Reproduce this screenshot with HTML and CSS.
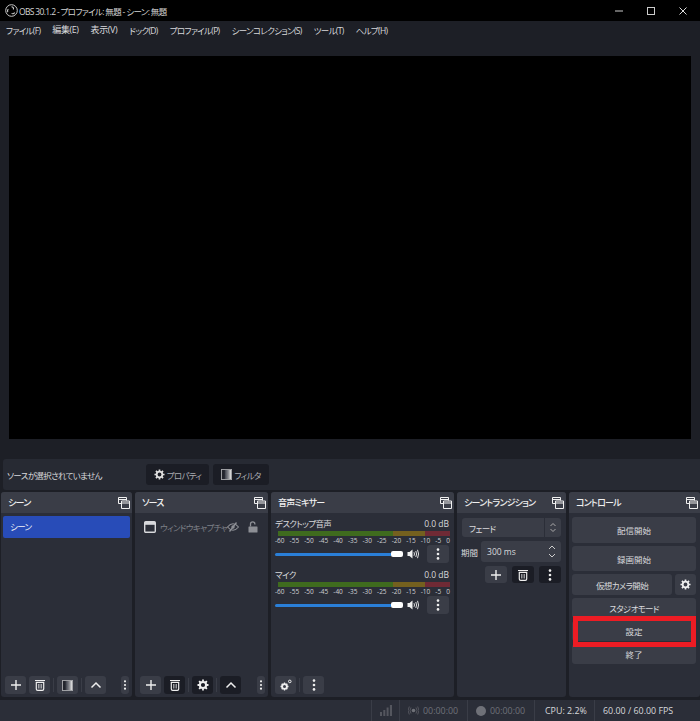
FILE: index.html
```html
<!DOCTYPE html>
<html lang="ja">
<head>
    <meta charset="UTF-8">
    <title>OBS 30.1.2</title>
    <link rel="stylesheet" href="styles.css">
</head>
<body>
    <svg class="defs" width="0" height="0">
        <defs>
            <linearGradient id="filter-fade"><stop offset="0" stop-color="#3a3d47"/><stop offset=".55" stop-color="#85878d"/><stop offset="1" stop-color="#e8e8e8"/></linearGradient>
        </defs>
        <symbol id="i-float" viewBox="0 0 12 12"><path d="M.5.5h8v3M.5.5v6h3M.5 2.500h8M3.500 4h8v7.500h-8zM3.500 6h8" fill="none" stroke="currentColor"/></symbol>
        <symbol id="i-plus" viewBox="0 0 12 12"><path d="M6 1v10M1 6h10" fill="none" stroke="currentColor" stroke-width="1.400"/></symbol>
        <symbol id="i-trash" viewBox="0 0 12 12"><path d="M1 1.500h10" stroke="currentColor" stroke-width="1.200"/><path d="M2.300 3.300h7.400v6.700q0 1.400-1.400 1.400H3.700q-1.400 0-1.400-1.400z" fill="none" stroke="currentColor" stroke-width="1.200"/><path d="M4.500 5v4.500M6 5v4.500M7.500 5v4.500" stroke="currentColor" stroke-width=".6"/></symbol>
        <symbol id="i-filter" viewBox="0 0 12 12"><rect x="1" y="1" width="3" height="10" fill="#23252d"/><rect x="4" y="1" width="7" height="10" fill="url(#filter-fade)"/><rect x=".5" y=".5" width="11" height="11" fill="none" stroke="#a8a9ad"/></symbol>
        <symbol id="i-up" viewBox="0 0 12 12"><path d="M1.500 8.500 6 4l4.500 4.500" fill="none" stroke="currentColor" stroke-width="1.500"/></symbol>
        <symbol id="i-dots" viewBox="0 0 4 12"><circle cx="2" cy="1.600" r="1.300" fill="currentColor"/><circle cx="2" cy="6" r="1.300" fill="currentColor"/><circle cx="2" cy="10.400" r="1.300" fill="currentColor"/></symbol>
        <symbol id="i-gear" viewBox="0 0 12 12"><circle cx="6" cy="6" r="3.100" fill="none" stroke="currentColor" stroke-width="2"/><path d="M6 .5v2M6 9.500v2M.5 6h2M9.500 6h2M2.100 2.100l1.400 1.400M8.500 8.500l1.400 1.400M2.100 9.900l1.400-1.400M8.500 3.500l1.400-1.400" stroke="currentColor" stroke-width="1.800"/></symbol>
        <symbol id="i-gears" viewBox="0 0 12 12"><circle cx="4.500" cy="7.500" r="2.400" fill="none" stroke="currentColor" stroke-width="1.800"/><path d="M4.500 3.500v1.500M4.500 10v1.500M.5 7.500H2M7 7.500h1.500M1.700 4.700l1 1M6.300 9.300l1 1M1.700 10.300l1-1M6.300 5.700l1-1" stroke="currentColor" stroke-width="1.300"/><circle cx="9.800" cy="2.400" r="1.300" fill="none" stroke="currentColor"/></symbol>
        <symbol id="i-speaker" viewBox="0 0 12 12"><path d="M.5 4h2L5.500 1.500v9L2.500 8h-2z" fill="currentColor"/><path d="M7 4.200q1 1.800 0 3.600M8.800 3q1.600 3 0 6M10.500 1.800q2.200 4.200 0 8.400" fill="none" stroke="currentColor" stroke-width=".9"/></symbol>
        <symbol id="i-window" viewBox="0 0 12 12"><rect x=".7" y=".7" width="10.600" height="10.600" rx="1" fill="none" stroke="currentColor" stroke-width="1.400"/><rect x="1" y="1" width="10" height="2.800" fill="currentColor"/></symbol>
        <symbol id="i-eye" viewBox="0 0 12 10"><path d="M.5 5Q6-1.500 11.500 5 6 11.500.5 5z" fill="none" stroke="currentColor" stroke-width="1.100"/><circle cx="6" cy="5" r="1.700" fill="currentColor"/><path d="M9.500.5 2.500 9.500" stroke="currentColor" stroke-width="1.300"/></symbol>
        <symbol id="i-lock" viewBox="0 0 10 12"><path d="M2.500 5.500V3a2.200 2.200 0 0 1 4.400 0v.5" fill="none" stroke="currentColor" stroke-width="1.300"/><rect x=".5" y="5.500" width="9" height="6" rx=".5" fill="currentColor"/></symbol>
    </svg>

    <div class="app">
        <header class="titlebar">
            <svg class="logo" width="13" height="13" viewBox="0 0 13 13"><circle cx="6.500" cy="6.500" r="5.800" fill="none" stroke="#ddd" stroke-width=".9"/><path d="M6.500 2.700a2 2 0 0 1 1.800 2.900M3 8.200a2 2 0 0 1 .4-3M9.600 8.600a2 2 0 0 1-3 .8" fill="none" stroke="#ccc" stroke-width="1.100"/></svg>
            <span class="title">OBS 30.1.2 - プロファイル: 無題 - シーン: 無題</span>
            <div class="win-btns">
                <svg width="8" height="8" viewBox="0 0 8 8"><path d="M0 4h8" stroke="#ccc"/></svg>
                <svg width="8" height="8" viewBox="0 0 8 8"><rect x=".5" y=".5" width="7" height="7" fill="none" stroke="#ccc"/></svg>
                <svg width="8" height="8" viewBox="0 0 8 8"><path d="M.5.500l7 7M7.500.500l-7 7" stroke="#ddd"/></svg>
            </div>
        </header>

        <nav class="menubar">
            <span>ファイル(F)</span><span class="kanji">編集(E)</span><span class="kanji">表示(V)</span><span>ドック(D)</span><span>プロファイル(P)</span><span>シーンコレクション(S)</span><span>ツール(T)</span><span>ヘルプ(H)</span>
        </nav>

        <main class="preview-wrap">
            <div class="preview"></div>
        </main>

        <div class="context">
            <span class="context-label">ソースが選択されていません</span>
            <button class="ctx-btn props"><svg width="11" height="11"><use href="#i-gear"/></svg>プロパティ</button>
            <button class="ctx-btn filters"><svg width="11" height="11"><use href="#i-filter"/></svg>フィルタ</button>
        </div>

        <div class="docks">
            <section class="dock">
                <div class="dock-head"><span>シーン</span><svg width="12" height="12"><use href="#i-float"/></svg></div>
                <div class="dock-body">
                    <div class="scene-list"><div class="scene-item">シーン</div></div>
                    <div class="tools">
                        <button class="tool"><svg width="12" height="12"><use href="#i-plus"/></svg></button>
                        <button class="tool"><svg width="12" height="12"><use href="#i-trash"/></svg></button>
                        <i class="tool-sep"></i>
                        <button class="tool"><svg width="11" height="11"><use href="#i-filter"/></svg></button>
                        <i class="tool-sep"></i>
                        <button class="tool"><svg width="12" height="12"><use href="#i-up"/></svg></button>
                        <button class="tool more"><svg width="4" height="10"><use href="#i-dots"/></svg></button>
                    </div>
                </div>
            </section>

            <section class="dock">
                <div class="dock-head"><span>ソース</span><svg width="12" height="12"><use href="#i-float"/></svg></div>
                <div class="dock-body">
                    <div class="source-list">
                        <div class="source-item">
                            <svg class="src-icon" width="12" height="12"><use href="#i-window"/></svg>
                            <span class="src-name">ウィンドウキャプチャ</span>
                            <svg class="src-eye" width="12" height="10"><use href="#i-eye"/></svg>
                            <svg class="src-lock" width="10" height="12"><use href="#i-lock"/></svg>
                        </div>
                    </div>
                    <div class="tools src-tools">
                        <button class="tool"><svg width="12" height="12"><use href="#i-plus"/></svg></button>
                        <button class="tool dark"><svg width="12" height="12"><use href="#i-trash"/></svg></button>
                        <i class="tool-sep"></i>
                        <button class="tool dark"><svg width="12" height="12"><use href="#i-gear"/></svg></button>
                        <i class="tool-sep"></i>
                        <button class="tool dark"><svg width="12" height="12"><use href="#i-up"/></svg></button>
                        <button class="tool more"><svg width="4" height="10"><use href="#i-dots"/></svg></button>
                    </div>
                </div>
            </section>

            <section class="dock">
                <div class="dock-head"><span>音声ミキサー</span><svg width="12" height="12"><use href="#i-float"/></svg></div>
                <div class="dock-body">
                    <div class="mixer">
                        <div class="channel">
                            <div class="ch-top"><span class="kana">デスクトップ音声</span><span>0.0 dB</span></div>
                            <div class="meter"><i class="m-green"></i><i class="m-yellow"></i><i class="m-red"></i></div>
                            <div class="ticks"><span>-60</span><span>-55</span><span>-50</span><span>-45</span><span>-40</span><span>-35</span><span>-30</span><span>-25</span><span>-20</span><span>-15</span><span>-10</span><span>-5</span><span>0</span></div>
                            <div class="ch-ctrl">
                                <div class="slider"><i class="slider-fill"></i><i class="slider-knob"></i></div>
                                <svg class="speaker" width="12" height="12"><use href="#i-speaker"/></svg>
                                <button class="tool ch-more"><svg width="4" height="12"><use href="#i-dots"/></svg></button>
                            </div>
                        </div>
                        <div class="channel">
                            <div class="ch-top"><span class="kana">マイク</span><span>0.0 dB</span></div>
                            <div class="meter"><i class="m-green"></i><i class="m-yellow"></i><i class="m-red"></i></div>
                            <div class="ticks"><span>-60</span><span>-55</span><span>-50</span><span>-45</span><span>-40</span><span>-35</span><span>-30</span><span>-25</span><span>-20</span><span>-15</span><span>-10</span><span>-5</span><span>0</span></div>
                            <div class="ch-ctrl">
                                <div class="slider"><i class="slider-fill"></i><i class="slider-knob"></i></div>
                                <svg class="speaker" width="12" height="12"><use href="#i-speaker"/></svg>
                                <button class="tool ch-more"><svg width="4" height="12"><use href="#i-dots"/></svg></button>
                            </div>
                        </div>
                    </div>
                    <div class="tools">
                        <button class="tool"><svg width="12" height="12"><use href="#i-gears"/></svg></button>
                        <i class="tool-sep"></i>
                        <button class="tool"><svg width="4" height="12"><use href="#i-dots"/></svg></button>
                    </div>
                </div>
            </section>

            <section class="dock">
                <div class="dock-head"><span>シーントランジション</span><svg width="12" height="12"><use href="#i-float"/></svg></div>
                <div class="dock-body trans">
                    <div class="combo"><span class="kana">フェード</span><i class="combo-sep"></i><svg width="6" height="11" viewBox="0 0 6 11"><path d="M.5 4 3 1.500 5.500 4M.5 7 3 9.500 5.500 7" fill="none" stroke="#aaa"/></svg></div>
                    <div class="duration">
                        <span>期間</span>
                        <div class="spin"><span>300 ms</span><svg width="8" height="13" viewBox="0 0 8 13"><path d="M1 4 4 1l3 3M1 9l3 3 3-3" fill="none" stroke="#ccc"/></svg></div>
                    </div>
                    <div class="trans-tools">
                        <button class="tool"><svg width="12" height="12"><use href="#i-plus"/></svg></button>
                        <button class="tool dark"><svg width="12" height="12"><use href="#i-trash"/></svg></button>
                        <button class="tool dark"><svg width="4" height="12"><use href="#i-dots"/></svg></button>
                    </div>
                </div>
            </section>

            <section class="dock">
                <div class="dock-head"><span>コントロール</span><svg width="12" height="12"><use href="#i-float"/></svg></div>
                <div class="dock-body controls">
                    <button class="ctl first">配信開始</button>
                    <button class="ctl second">録画開始</button>
                    <div class="ctl-row">
                        <button class="ctl"><span class="kana">仮想カメラ開始</span></button>
                        <button class="ctl ctl-gear"><svg width="11" height="11"><use href="#i-gear"/></svg></button>
                    </div>
                    <button class="ctl"><span class="kana">スタジオモード</span></button>
                    <button class="ctl marked">設定</button>
                    <button class="ctl">終了</button>
                </div>
            </section>
        </div>

        <footer class="statusbar">
            <div class="stat sig">
                <svg width="12" height="11" viewBox="0 0 12 11"><path d="M0 7h2v4H0zM3.300 5h2v6h-2zM6.600 2.500h2V11h-2zM9.900 0H12v11H9.900z" fill="#54565e"/></svg>
            </div>
            <div class="stat rec-live">
                <svg width="11" height="9" viewBox="0 0 11 9"><circle cx="5.500" cy="4.500" r="1.800" fill="#6f7178"/><path d="M3 1.500q-2 3 0 6M8 1.500q2 3 0 6M1.300.500q-2.500 4 0 8M9.700.500q2.500 4 0 8" fill="none" stroke="#5f6168" stroke-width=".8"/></svg>
                <span class="dim">00:00:00</span>
            </div>
            <div class="stat rec-file">
                <i class="rec-dot"></i>
                <span class="dim">00:00:00</span>
            </div>
            <div class="stat cpu">CPU: 2.2%</div>
            <div class="stat fps">60.00 / 60.00 FPS</div>
        </footer>
    </div>
</body>
</html>
```
FILE: styles.css
```css
* {
    box-sizing: border-box;
}

html, body {
    margin: 0;
    height: 100%;
}

body {
    font-family: "Open Sans", "Noto Sans CJK JP", sans-serif;
    font-size: 8.500px;
    font-feature-settings: "palt";
    color: #d8d9dc;
    background-color: #1d1f26;
    overflow: hidden;
}

button {
    font: inherit;
    color: inherit;
    border: none;
    padding: 0;
}

svg {
    display: block;
    flex: none;
}

.defs {
    position: absolute;
}

/* kana runs are much narrower in the original UI font */
.kana,
.menubar,
.title,
.context-label,
.ctx-btn,
.scene-item,
.src-name {
    font-size: 8.500px;
    letter-spacing: -0.65px;
}

.app {
    display: flex;
    flex-direction: column;
    height: 721px;
}

.titlebar {
    display: flex;
    align-items: center;
    height: 21px;
    padding-left: 5px;
    background-color: #000;
    color: #d4d4d4;
}

.title {
    margin-left: 1px;
}

.win-btns {
    display: flex;
    gap: 24px;
    margin-left: auto;
    margin-right: 13px;
}

.menubar {
    display: flex;
    gap: 12px;
    align-items: center;
    height: 17px;
    padding-left: 6px;
    background-color: #1d1f26;
    color: #d8d9dc;
}

.kanji {
    font-size: 9px;
    letter-spacing: -0.4px;
}

.preview-wrap {
    height: 421px;
    padding: 18px 9px 20px;
}

.preview {
    height: 100%;
    background-color: #000;
}

.context {
    display: flex;
    align-items: center;
    height: 31px;
    margin: 0 0 2px 3px;
    padding-left: 4px;
    background-color: #272a33;
    border-radius: 3px 0 0 3px;
}

.context-label {
    width: 139px;
}

.ctx-btn {
    display: flex;
    align-items: center;
    justify-content: center;
    gap: 2px;
    height: 21px;
    background-color: #1b1d25;
    border-radius: 3px;
    color: #a9abb0;
}

.ctx-btn svg {
    color: #e0e0e0;
}

.props {
    width: 63px;
}

.filters {
    width: 56px;
    margin-left: 4px;
}

.docks {
    display: grid;
    grid-template-columns: 131px 133px 183px 109px 131px;
    gap: 3px;
    height: 205px;
    margin-left: 1px;
}

.dock {
    display: flex;
    flex-direction: column;
    background-color: #2b2e38;
    border-radius: 3px;
    overflow: hidden;
}

.dock-head {
    display: flex;
    align-items: center;
    justify-content: space-between;
    flex: none;
    height: 21px;
    padding: 0 2px 0 7px;
    background-color: #3a3d47;
    font-size: 9px;
    font-weight: 500;
    letter-spacing: -0.8px;
    color: #f0f0f0;
}

.dock-body {
    display: flex;
    flex-direction: column;
    flex: 1;
    min-height: 0;
}

.scene-list {
    flex: 1;
    padding: 3px 2px;
}

.scene-item {
    height: 22px;
    line-height: 22px;
    padding-left: 7px;
    background-color: #284cb8;
    border-radius: 2px;
    color: #f2f3f7;
}

.source-list {
    flex: 1;
    padding-top: 7px;
}

.source-item {
    display: flex;
    align-items: center;
    height: 13px;
    padding-left: 9px;
}

.src-icon {
    color: #d8d9dc;
}

.src-name {
    width: 67px;
    margin-left: 4px;
    white-space: nowrap;
    color: #7e8087;
}

.src-eye {
    color: #8d8f95;
}

.src-lock {
    margin-left: 9px;
    color: #8d8f95;
}

.tools {
    display: flex;
    align-items: center;
    gap: 3px;
    flex: none;
    height: 18px;
    margin: 0 3px 3px 4px;
}

.src-tools {
    margin-left: 5px;
}

.tool {
    display: flex;
    align-items: center;
    justify-content: center;
    width: 21px;
    height: 18px;
    background-color: #3a3d47;
    border-radius: 3px;
    color: #eee;
}

.tool.dark {
    background-color: #1b1d25;
}

.tool.more {
    width: 8px;
    margin-left: auto;
}

.tool-sep {
    width: 1px;
    height: 14px;
    background-color: #3a3d47;
}

.mixer {
    flex: 1;
    padding: 5px 5px 0 4px;
}

.channel {
    margin-bottom: 6px;
}

.ch-top {
    display: flex;
    justify-content: space-between;
    height: 12px;
    line-height: 12px;
}

.meter {
    display: flex;
    height: 5px;
    margin: 1px -1px 0 3px;
}

.meter i {
    display: block;
    height: 100%;
}

.m-green {
    width: 115px;
    background-color: #3f6b1e;
}

.m-yellow {
    width: 32px;
    background-color: #74601f;
}

.m-red {
    flex: 1;
    background-color: #6f2a35;
}

.ticks {
    display: flex;
    justify-content: space-between;
    height: 10px;
    margin-right: -1px;
    font-size: 6.500px;
    line-height: 10px;
    color: #d0d1d4;
}

.ch-ctrl {
    display: flex;
    align-items: center;
    height: 18px;
    margin-top: -1px;
}

.slider {
    display: flex;
    align-items: center;
    width: 128px;
}

.slider-fill {
    flex: 1;
    height: 3px;
    background-color: #2a7fd8;
    border-radius: 2px 0 0 2px;
}

.slider-knob {
    width: 12px;
    height: 6px;
    background-color: #fff;
    border-radius: 2px;
}

.speaker {
    margin-left: 4px;
    color: #f0f0f0;
}

.ch-more {
    width: 22px;
    margin-left: auto;
}

.trans {
    padding: 5px 5px 0;
}

.combo {
    display: flex;
    align-items: center;
    height: 19px;
    padding: 0 5px 0 7px;
    background-color: #3a3d47;
    border-radius: 3px;
}

.combo-sep {
    width: 1px;
    height: 100%;
    margin-left: auto;
    margin-right: 5px;
    background-color: #2b2e38;
}

.duration {
    display: flex;
    align-items: center;
    gap: 3px;
    margin: 4px 0 0 -1px;
}

.spin {
    display: flex;
    align-items: center;
    justify-content: space-between;
    flex: 1;
    height: 21px;
    padding: 0 5px 0 6px;
    background-color: #3a3d47;
    border-radius: 3px;
}

.trans-tools {
    display: flex;
    gap: 5px;
    justify-content: flex-end;
    margin-top: 4px;
}

.trans-tools .tool {
    height: 17px;
    width: 22px;
}

.controls {
    position: relative;
    gap: 3px;
    padding: 4px 4px 0 3px;
}

.ctl {
    height: 20px;
    background-color: #3a3d47;
    border-radius: 3px;
    color: #d8d9dc;
    flex: none;
}

.ctl.first {
    height: 26px;
}

.ctl.second {
    height: 25px;
}

.ctl-row {
    display: grid;
    grid-template-columns: 1fr 21px;
    gap: 3px;
    height: 21px;
}

.ctl-row .ctl {
    height: 21px;
}

.ctl-gear {
    display: flex;
    align-items: center;
    justify-content: center;
    color: #eee;
}

/* red annotation over the settings button */
.marked {
    position: relative;
}

.marked::after {
    content: "";
    position: absolute;
    inset: -5px 0 -6px 1px;
    border: 5px solid #ed1c24;
}

.statusbar {
    display: flex;
    justify-content: flex-end;
    height: 22px;
    margin-top: 2px;
    background-color: #2b2e38;
    border-top: 1px solid #1d1f26;
    font-size: 8.900px;
}

.stat {
    display: flex;
    align-items: center;
    gap: 4px;
    padding-left: 8px;
    border-left: 1px solid #3a3d47;
}

.sig {
    width: 28px;
}

.rec-live {
    width: 68px;
}

.rec-file {
    width: 67px;
}

.cpu {
    width: 60px;
    padding-left: 10px;
}

.fps {
    width: 106px;
}

.dim {
    color: #6f7178;
}

.rec-dot {
    width: 10px;
    height: 10px;
    border-radius: 50%;
    background-color: #6f7178;
}
```
